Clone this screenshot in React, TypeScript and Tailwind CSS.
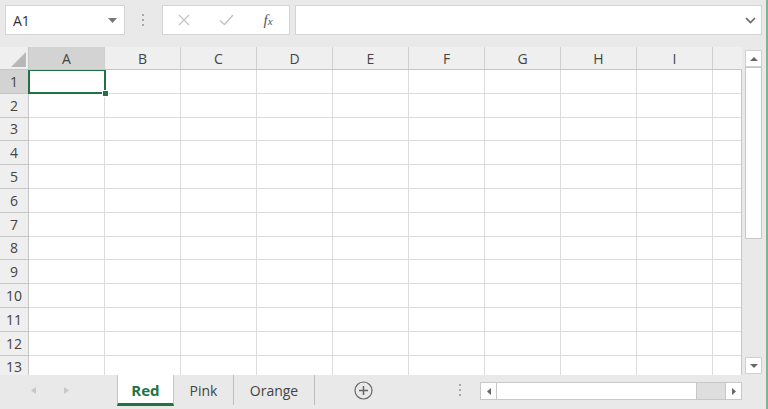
import React from 'react';

const COLS = ['A', 'B', 'C', 'D', 'E', 'F', 'G', 'H', 'I', ''];
const ROWS = Array.from({ length: 13 }, (_, i) => i + 1);

const font = "font-['Open_Sans','Liberation_Sans',sans-serif]";

function Dots() {
  return (
    <div className="flex w-[3px] flex-col gap-[3px]">
      <span className="h-[2px] w-[2px] bg-[#a8a8a8]" />
      <span className="h-[2px] w-[2px] bg-[#a8a8a8]" />
      <span className="h-[2px] w-[2px] bg-[#a8a8a8]" />
    </div>
  );
}

function FormulaBar() {
  return (
    <div className="flex h-[47px] items-start pt-[5px] pl-[5px]">
      <div className="flex h-[30px] w-[120px] items-center justify-between border border-[#d4d4d4] bg-white pl-[7px] pr-[7px]">
        <span className="text-[14px] text-[#333]">A1</span>
        <svg width="9" height="5" viewBox="0 0 9 5">
          <path d="M0 0h9L4.5 5z" fill="#777" />
        </svg>
      </div>
      <div className="flex h-[30px] w-[37px] items-center justify-center">
        <Dots />
      </div>
      <div className="flex h-[30px] w-[128px] items-center border border-[#d4d4d4] bg-white">
        <div className="flex w-[42px] justify-center">
          <svg width="12" height="12" viewBox="0 0 12 12">
            <path d="M1 1l10 10M11 1L1 11" stroke="#c4c4c4" strokeWidth="1.3" />
          </svg>
        </div>
        <div className="flex w-[42px] justify-center">
          <svg width="15" height="12" viewBox="0 0 15 12">
            <path d="M1 6.5l4.5 4L14 1" stroke="#c4c4c4" strokeWidth="1.5" fill="none" />
          </svg>
        </div>
        <div className="flex w-[42px] justify-center">
          <span className="font-['Liberation_Serif',serif] text-[15px] italic text-[#555]">
            f<span className="text-[11px]">x</span>
          </span>
        </div>
      </div>
      <div className="ml-[5px] flex h-[30px] w-[467px] items-center justify-end border border-[#d4d4d4] bg-white pr-[5px]">
        <svg width="11" height="7" viewBox="0 0 11 7">
          <path d="M1 1l4.5 4.5L10 1" stroke="#666" strokeWidth="1.6" fill="none" />
        </svg>
      </div>
    </div>
  );
}

function Grid() {
  return (
    <div className="flex h-[328px] w-[742px] flex-col overflow-hidden">
      <div className="flex h-[23px] shrink-0 border-b border-[#c6c6c6] bg-[#efefef]">
        <div className="relative w-[29px] shrink-0 border-r border-[#c6c6c6]">
          <svg className="absolute bottom-[2px] right-[2px]" width="15" height="15" viewBox="0 0 15 15">
            <path d="M15 0v15H0z" fill="#b8b8b8" />
          </svg>
        </div>
        {COLS.map((c, i) => (
          <div
            key={i}
            className={
              'flex shrink-0 items-center justify-center border-r border-[#d0d0d0] text-[14px] text-[#444] ' +
              (i === 9 ? 'w-[28px] border-r-0 ' : 'w-[76px] ') +
              (c === 'A' ? 'bg-[#d3d3d3] text-[#2c5a3d]' : '')
            }
          >
            {c}
          </div>
        ))}
      </div>
      <div className="relative flex-1 overflow-hidden border-r border-[#c6c6c6]">
        {ROWS.map((r) => (
          <div key={r} className="flex h-[23.8px] shrink-0">
            <div
              className={
                'flex w-[29px] shrink-0 items-center justify-center border-r border-b border-[#c6c6c6] text-[14px] text-[#444] ' +
                (r === 1 ? 'bg-[#d3d3d3]' : 'bg-[#efefef]')
              }
            >
              {r}
            </div>
            {COLS.map((_, i) => (
              <div
                key={i}
                className={
                  'shrink-0 border-r border-b border-[#dcdcdc] bg-white ' + (i === 9 ? 'w-[28px] border-r-0' : 'w-[76px]')
                }
              />
            ))}
          </div>
        ))}
        <div className="absolute left-[28px] top-[-1px] h-[25px] w-[78px] border-2 border-[#217346]">
          <span className="absolute bottom-[-5px] right-[-5px] h-[7px] w-[7px] border border-white bg-[#217346]" />
        </div>
      </div>
    </div>
  );
}

function VScroll() {
  return (
    <div className="flex h-[328px] w-[24px] flex-col items-start pt-[3px] pl-[3px]">
      <div className="flex h-[17px] w-[17px] items-center justify-center border border-[#d0d0d0] bg-white">
        <svg width="8" height="4" viewBox="0 0 8 4">
          <path d="M0 4h8L4 0z" fill="#666" />
        </svg>
      </div>
      <div className="h-[172px] w-[17px] border border-[#c8c8c8] bg-white" />
      <div className="flex-1" />
      <div className="mb-[1px] flex h-[17px] w-[17px] items-center justify-center border border-[#d0d0d0] bg-white">
        <svg width="8" height="4" viewBox="0 0 8 4">
          <path d="M0 0h8L4 4z" fill="#666" />
        </svg>
      </div>
    </div>
  );
}

function SheetTabs() {
  return (
    <div className="flex h-[34px] items-start">
      <div className="flex h-[30px] w-[117px] items-center gap-[28px] pl-[31px]">
        <svg width="5" height="7" viewBox="0 0 5 7">
          <path d="M5 0v7L0 3.5z" fill="#c8c8c8" />
        </svg>
        <svg width="5" height="7" viewBox="0 0 5 7">
          <path d="M0 0v7l5-3.5z" fill="#c8c8c8" />
        </svg>
      </div>
      <div className="flex h-[31px] w-[57px] items-center justify-center border-x border-[#c6c6c6] border-b-[3px] border-b-[#217346] bg-white pt-[2px] text-[15px] font-bold text-[#217346]">
        Red
      </div>
      <div className="flex h-[30px] w-[60px] items-center justify-center border-r border-[#bdbdbd] text-[14px] text-[#444]">
        Pink
      </div>
      <div className="flex h-[30px] w-[81px] items-center justify-center border-r border-[#bdbdbd] text-[14px] text-[#444]">
        Orange
      </div>
      <div className="flex h-[30px] w-[96px] items-center justify-center">
        <svg width="19" height="19" viewBox="0 0 19 19">
          <circle cx="9.5" cy="9.5" r="8.5" stroke="#666" strokeWidth="1.2" fill="none" />
          <path d="M9.5 5v9M5 9.5h9" stroke="#666" strokeWidth="1.5" />
        </svg>
      </div>
      <div className="flex h-[30px] w-[69px] items-center justify-end pr-[18px]">
        <Dots />
      </div>
      <div className="mt-[7px] flex h-[18px] w-[262px] shrink-0 border border-[#c8c8c8] bg-[#dedede]">
        <div className="flex w-[16px] items-center justify-center border-r border-[#c8c8c8] bg-white">
          <svg width="4" height="7" viewBox="0 0 4 7">
            <path d="M4 0v7L0 3.5z" fill="#666" />
          </svg>
        </div>
        <div className="w-[200px] border-r border-[#c8c8c8] bg-white" />
        <div className="flex-1" />
        <div className="flex w-[16px] items-center justify-center border-l border-[#c8c8c8] bg-white">
          <svg width="4" height="7" viewBox="0 0 4 7">
            <path d="M0 0v7l4-3.5z" fill="#666" />
          </svg>
        </div>
      </div>
    </div>
  );
}

export default function App() {
  return (
    <div className={`h-[409px] w-[768px] overflow-hidden border-r-2 border-[#7fb397] bg-[#e9e9e9] ${font}`}>
      <FormulaBar />
      <div className="flex">
        <Grid />
        <VScroll />
      </div>
      <SheetTabs />
    </div>
  );
}
